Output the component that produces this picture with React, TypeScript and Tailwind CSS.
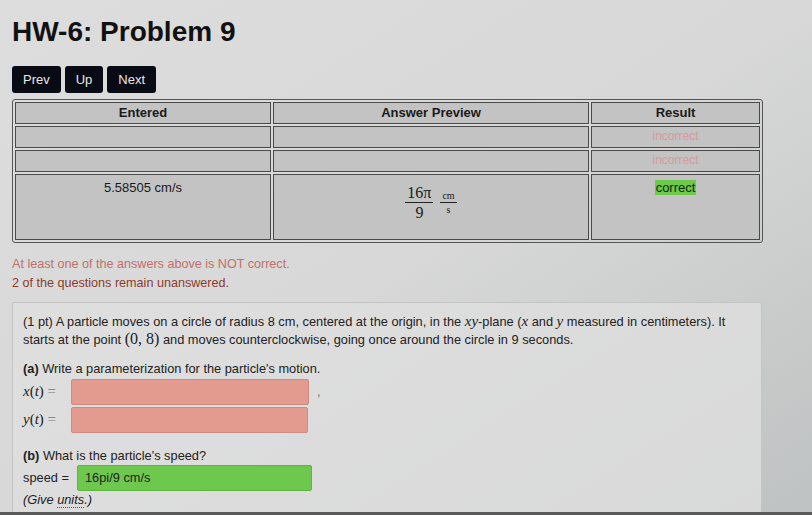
import React from "react";

const sans = { fontFamily: '"Liberation Sans", Arial, sans-serif' };

function Frac({ top, bottom, small }: { top: string; bottom: string; small?: boolean }) {
  return (
    <span className={`inline-flex flex-col items-center align-middle ${small ? "text-[10px]" : "text-[16px]"}`}>
      <span className={`border-b border-[#222] px-[2px] ${small ? "leading-[13px]" : "leading-[19px]"}`}>{top}</span>
      <span className={small ? "leading-[14px]" : "leading-[20px]"}>{bottom}</span>
    </span>
  );
}

function M({ children }: { children: React.ReactNode }) {
  return <span className="font-['Liberation_Serif',serif] text-[15px] italic leading-none">{children}</span>;
}

function Lhs({ v }: { v: string }) {
  return (
    <span className="w-[48px] font-['Liberation_Serif',serif] text-[15px] leading-none">
      <span className="italic">{v}</span>(<span className="italic">t</span>) <span className="text-[#777]">=</span>
    </span>
  );
}

export default function App() {
  const cell = "border border-[#4a4a4a] bg-[#c3c3c3] text-center align-top";
  return (
    <div
      className="flex h-[515px] w-[812px] flex-col overflow-hidden bg-linear-to-br from-[#dddddd] via-[#d8d8d8] to-[#bfc2c2] text-[#1a1a1a]"
      style={sans}
    >
      <div className="flex-1 overflow-hidden px-3 pt-[16px]">
        <h1 className="text-[28px] font-bold leading-[32px] text-[#111]">HW-6: Problem 9</h1>

        <div className="mt-[18px] flex gap-[4px]">
          {["Prev", "Up", "Next"].map((label) => (
            <button
              key={label}
              className="h-[27px] rounded-[3px] bg-[#080b14] px-[11px] text-[13px] text-[#e8e8e8]"
            >
              {label}
            </button>
          ))}
        </div>

        <table className="mt-[6px] w-[751px] border-separate border-spacing-[2px] rounded-[3px] border border-[#555] text-[13px]">
          <colgroup>
            <col className="w-[256px]" />
            <col className="w-[316px]" />
            <col />
          </colgroup>
          <thead>
            <tr className="h-[21px]">
              <th className={`${cell} align-middle font-bold`}>Entered</th>
              <th className={`${cell} align-middle font-bold`}>Answer Preview</th>
              <th className={`${cell} align-middle font-bold`}>Result</th>
            </tr>
          </thead>
          <tbody>
            {[0, 1].map((i) => (
              <tr key={i} className="h-[22px]">
                <td className={cell}></td>
                <td className={cell}></td>
                <td className={`${cell} align-middle text-[12px] text-[#d59a98]`}>incorrect</td>
              </tr>
            ))}
            <tr className="h-[66px]">
              <td className={`${cell} pt-[3px]`}>5.58505 cm/s</td>
              <td className={`${cell} pt-[8px]`}>
                <span className="inline-flex items-center gap-[7px] font-['Liberation_Serif',serif]">
                  <Frac top="16π" bottom="9" />
                  <Frac top="cm" bottom="s" small />
                </span>
              </td>
              <td className={`${cell} pt-[3px]`}>
                <span className="bg-[#6cc94a] px-[1px] text-[#0d2a08]">correct</span>
              </td>
            </tr>
          </tbody>
        </table>

        <div className="mt-[12px] text-[12.6px] leading-[19px]">
          <div className="text-[#c0706a]">At least one of the answers above is NOT correct.</div>
          <div className="text-[#8b3a2c]">2 of the questions remain unanswered.</div>
        </div>

        <div className="mt-[9px] h-[240px] w-[750px] rounded-[2px] border border-[#c4c4c4] bg-[#dedede]/80 px-[10px] pt-[10px] text-[12.8px] leading-[18px] text-[#222]">
          <p>
            (1 pt) A particle moves on a circle of radius 8 cm, centered at the origin, in the <M>xy</M>-plane (
            <M>x</M> and <M>y</M> measured in centimeters). It starts at the point{" "}
            <span className="font-['Liberation_Serif',serif] text-[16px] leading-none">(0, 8)</span> and moves
            counterclockwise, going once around the circle in 9 seconds.
          </p>

          <p className="mt-[11px]">
            <span className="font-bold">(a)</span> Write a parameterization for the particle's motion.
          </p>
          <div className="mt-[1px] flex items-center">
            <Lhs v="x" />
            <span className="h-[26px] w-[238px] rounded-[2px] border border-[#d08a80] bg-[#e39a8f]" />
            <span className="ml-[8px] text-[#777]">,</span>
          </div>
          <div className="mt-[2px] flex items-center">
            <Lhs v="y" />
            <span className="h-[26px] w-[237px] rounded-[2px] border border-[#d08a80] bg-[#e39a8f]" />
          </div>

          <p className="mt-[14px]">
            <span className="font-bold">(b)</span> What is the particle's speed?
          </p>
          <div className="flex items-center">
            <span className="w-[54px]">speed =</span>
            <span className="flex h-[26px] w-[235px] items-center rounded-[2px] border border-[#5fb443] bg-[#6fc84e] px-[7px]">
              16pi/9 cm/s
            </span>
          </div>
          <p className="italic">
            (Give <span className="border-b border-dotted border-[#3050a0]">units</span>.)
          </p>
        </div>
      </div>
      <div className="h-[3px] bg-[#5a5a5a]" />
    </div>
  );
}
